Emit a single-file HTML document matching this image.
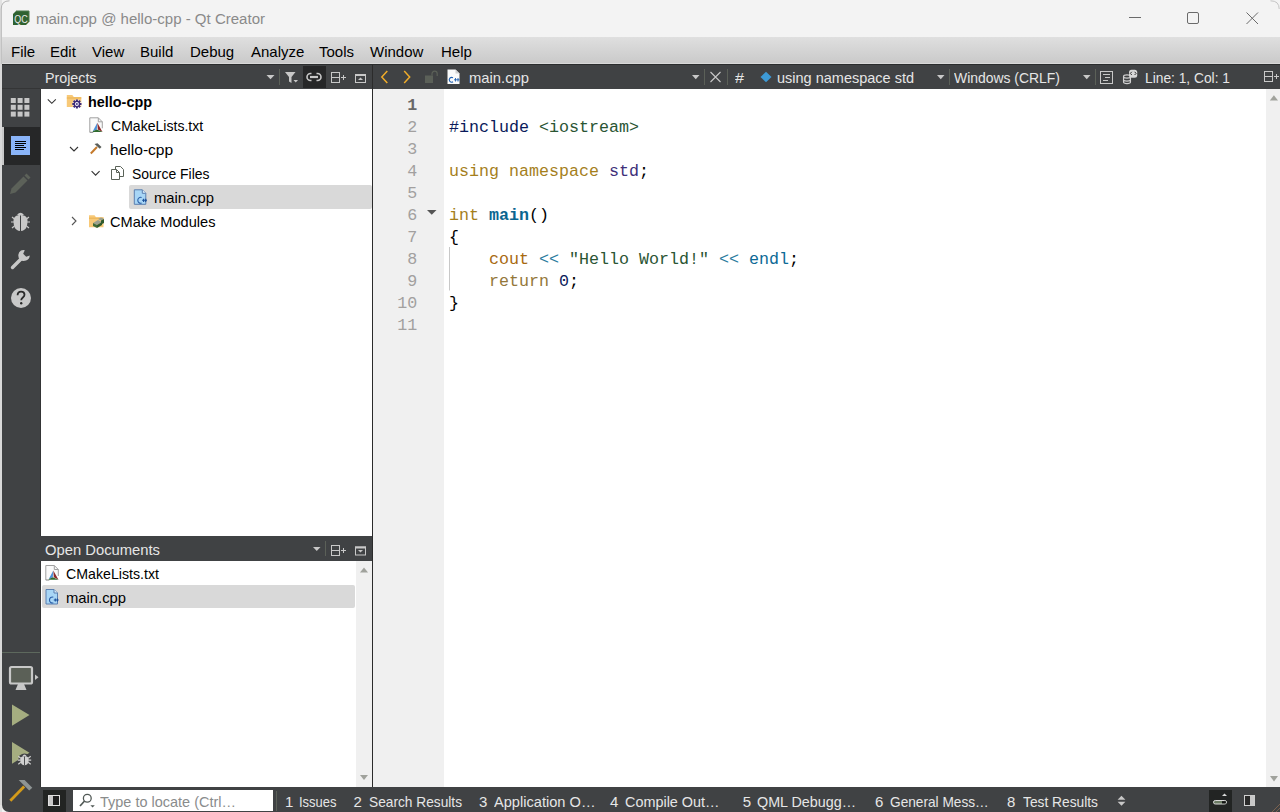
<!DOCTYPE html>
<html><head><meta charset="utf-8"><title>Qt Creator</title>
<style>
*{box-sizing:border-box;margin:0;padding:0}
html,body{width:1280px;height:812px;overflow:hidden;background:#f3f3f3}
.a{position:absolute}
.t{position:absolute;white-space:pre;line-height:1}
svg{position:absolute;left:0;top:0}
</style></head><body>
<div class="a" style="left:0px;top:0px;width:1280px;height:37px;background:#f3f3f3;"></div>
<div class="a" style="left:0px;top:37px;width:1280px;height:26px;background:linear-gradient(#dfdfdf,#cacaca);"></div>
<div class="a" style="left:0px;top:63px;width:1280px;height:1px;background:#d9d9d9;"></div>
<div class="a" style="left:0px;top:0px;width:2px;height:812px;background:#e2e2e2;"></div>
<div class="a" style="left:2px;top:64px;width:38px;height:748px;background:#404244;border-bottom-left-radius:7px"></div>
<div class="a" style="left:4px;top:127px;width:36px;height:38px;background:#262728;"></div>
<div class="a" style="left:2px;top:127px;width:2px;height:38px;background:#c8c8c8;"></div>
<div class="a" style="left:40px;top:64px;width:1px;height:748px;background:#343536;"></div>
<div class="a" style="left:2px;top:88px;width:38px;height:1px;background:#343536;"></div>
<div class="a" style="left:40px;top:64px;width:333px;height:25px;background:#404244;"></div>
<div class="a" style="left:41px;top:89px;width:331px;height:447px;background:#fff;"></div>
<div class="a" style="left:129px;top:185px;width:243px;height:23.5px;background:#d9d9d9;border-radius:2px"></div>
<div class="a" style="left:40px;top:536px;width:333px;height:25px;background:#404244;"></div>
<div class="a" style="left:41px;top:561px;width:331px;height:226px;background:#fff;"></div>
<div class="a" style="left:356px;top:561px;width:16px;height:226px;background:#f0f0f0;"></div>
<div class="a" style="left:42px;top:585px;width:313.3px;height:23.2px;background:#d9d9d9;border-radius:2px"></div>
<div class="a" style="left:372px;top:64px;width:1px;height:723px;background:#2b2b2b;"></div>
<div class="a" style="left:373px;top:64px;width:907px;height:25px;background:#404244;"></div>
<div class="a" style="left:373px;top:89px;width:71px;height:698px;background:#f0f0f0;"></div>
<div class="a" style="left:444px;top:89px;width:822px;height:698px;background:#fff;"></div>
<div class="a" style="left:1266px;top:89px;width:14px;height:698px;background:#f0f0f0;"></div>
<div class="a" style="left:40px;top:787px;width:1240px;height:25px;background:#404244;"></div>
<div class="a" style="left:303px;top:66px;width:23px;height:22px;background:#262728;"></div>
<div class="a" style="left:43px;top:790px;width:23px;height:22px;background:#222423;"></div>
<div class="a" style="left:72.5px;top:790px;width:200.5px;height:21px;background:#fff;"></div>
<div class="a" style="left:1209px;top:790px;width:23px;height:22px;background:#222423;"></div>
<div class="a" style="left:2px;top:64px;width:1278px;height:1px;background:#2b2d2e;"></div>
<div class="a" style="left:2px;top:652px;width:38px;height:1px;background:#5d685d;"></div>
<svg width="1280" height="812" viewBox="0 0 1280 812">
<path d="M16 11 H29 V22 L26 25 H13 V14 Z" fill="#2f6230"/>
<path d="M16 11 H29 V22" fill="none" stroke="#4f7a4c" stroke-width="1"/>
<text x="14.2" y="22.6" font-family="Liberation Sans" font-size="11" fill="#e8e8e8" textLength="13.5" lengthAdjust="spacingAndGlyphs">QC</text>
<line x1="1129" y1="17.5" x2="1141" y2="17.5" stroke="#6a6a6a" stroke-width="1"/>
<rect x="1187.5" y="12.5" width="11" height="11" rx="1.5" fill="none" stroke="#6a6a6a" stroke-width="1"/>
<path d="M1246.5 12.5 L1258 24 M1258 12.5 L1246.5 24" stroke="#6a6a6a" stroke-width="1"/>
<rect x="10.8" y="98.0" width="5" height="5" fill="#c6c6c6"/>
<rect x="10.8" y="104.8" width="5" height="5" fill="#c6c6c6"/>
<rect x="10.8" y="111.6" width="5" height="5" fill="#c6c6c6"/>
<rect x="17.6" y="98.0" width="5" height="5" fill="#c6c6c6"/>
<rect x="17.6" y="104.8" width="5" height="5" fill="#c6c6c6"/>
<rect x="17.6" y="111.6" width="5" height="5" fill="#c6c6c6"/>
<rect x="24.4" y="98.0" width="5" height="5" fill="#c6c6c6"/>
<rect x="24.4" y="104.8" width="5" height="5" fill="#c6c6c6"/>
<rect x="24.4" y="111.6" width="5" height="5" fill="#c6c6c6"/>
<rect x="11" y="136" width="19" height="19" fill="#8ab4f8"/>
<line x1="15" y1="141.5" x2="26" y2="141.5" stroke="#000" stroke-width="1"/>
<line x1="15" y1="143.5" x2="26" y2="143.5" stroke="#000" stroke-width="1"/>
<line x1="15" y1="145.5" x2="24" y2="145.5" stroke="#000" stroke-width="1"/>
<line x1="15" y1="147.5" x2="26" y2="147.5" stroke="#000" stroke-width="1"/>
<line x1="15" y1="149.5" x2="24" y2="149.5" stroke="#000" stroke-width="1"/>
<path d="M10 194 L11.5 188.5 L23.5 176.5 L27.5 180.5 L15.5 192.5 Z" fill="#5c6159"/>
<path d="M24.5 175.5 L26.5 173.5 L30.5 177.5 L28.5 179.5 Z" fill="#5c6159"/>
<path d="M20.5 231 C14 231 13.5 224 13.5 221 C13.5 217 16 215 20.5 215 C25 215 27.5 217 27.5 221 C27.5 224 27 231 20.5 231 Z" fill="#c8c8c8"/>
<path d="M17 215 Q20.5 210.5 24 215 Z" fill="#c8c8c8"/>
<line x1="20.5" y1="215.5" x2="20.5" y2="231" stroke="#404244" stroke-width="1"/>
<path d="M12 217 L14.5 219 M11 222 H14 M12 228 L14.5 226 M29 217 L26.5 219 M30 222 H27 M29 228 L26.5 226" stroke="#c8c8c8" stroke-width="1.2"/>
<path d="M12.5 267.5 L21.5 258.5" stroke="#c8c8c8" stroke-width="3.4" stroke-linecap="round"/>
<path d="M21 250.5 A6 6 0 0 0 19.8 259.5 A6 6 0 0 0 29.8 255.5 L26.2 256.8 L23.2 253.8 L24.8 250.2 A6 6 0 0 0 21 250.5 Z" fill="#c8c8c8"/>
<circle cx="21" cy="298" r="10" fill="#c8c8c8"/>
<path d="M17.6 295.2 C17.6 292.8 19.2 291.6 21.1 291.6 C23.2 291.6 24.5 292.9 24.5 294.7 C24.5 297.4 21.2 297.5 21.2 300.2" fill="none" stroke="#2a2a2a" stroke-width="1.8"/>
<circle cx="21.2" cy="303.3" r="1.2" fill="#2a2a2a"/>
<rect x="10" y="667" width="22" height="16.5" rx="1.5" fill="#5b6057" stroke="#c8c8c8" stroke-width="2.2"/>
<path d="M18 684 H24 L26.5 690 H15.5 Z" fill="#c8c8c8"/>
<path d="M35 674.5 L38.5 677.3 L35 680 Z" fill="#c8c8c8"/>
<path d="M12 704.5 L29.5 715 L12 725.8 Z" fill="#a5ad80"/>
<path d="M12 742 L29.5 752.8 L12 763.8 Z" fill="#a5ad80"/>
<ellipse cx="24.5" cy="760" rx="6.3" ry="6.6" fill="#404244"/>
<path d="M24.5 765.3 C20.8 765.3 20.2 761 20.2 759.8 C20.2 757.3 21.8 756.3 24.5 756.3 C27.2 756.3 28.8 757.3 28.8 759.8 C28.8 761 28.2 765.3 24.5 765.3 Z" fill="#d0d0d0"/>
<path d="M22.2 756.6 Q24.5 752.6 26.8 756.6 Z" fill="#d0d0d0"/>
<line x1="24.5" y1="756.5" x2="24.5" y2="765.3" stroke="#404244" stroke-width="0.9"/>
<path d="M18.3 756.3 L20.8 758.2 M17.8 760.2 H20.5 M18.3 764.2 L20.8 762.3 M30.7 756.3 L28.2 758.2 M31.2 760.2 H28.5 M30.7 764.2 L28.2 762.3" stroke="#d0d0d0" stroke-width="1.2"/>
<path d="M10.3 800.8 L24.2 786.6" stroke="#d49b1a" stroke-width="2.8"/>
<path d="M18.7 780 H24.6 L32.3 787.7 L29.2 790.4 Z" fill="#8e9494"/>
<path d="M266.5 75 H274.5 L270.5 79.2 Z" fill="#c8c8c8"/>
<line x1="279.5" y1="69" x2="279.5" y2="85" stroke="#5b6058" stroke-width="1"/>
<path d="M285 72 H295.5 L291.5 77 V83 L289 81.5 V77 Z" fill="#c8c8c8"/>
<path d="M293.5 80 H298 L295.75 82.5 Z" fill="#c8c8c8"/>
<path d="M311.5 73.5 H310.5 A3.5 3.5 0 0 0 310.5 80.5 H311.5 M316.5 73.5 H317.5 A3.5 3.5 0 0 1 317.5 80.5 H316.5" fill="none" stroke="#c8c8c8" stroke-width="1.6"/>
<line x1="310" y1="77" x2="318" y2="77" stroke="#c8c8c8" stroke-width="2.2"/>
<rect x="331.5" y="72.5" width="8" height="10" fill="none" stroke="#c8c8c8" stroke-width="1"/>
<line x1="331" y1="77.5" x2="340" y2="77.5" stroke="#c8c8c8" stroke-width="1"/>
<path d="M341 77.5 H346 M343.5 75 V80" stroke="#c8c8c8" stroke-width="1"/>
<rect x="355.5" y="74.5" width="10" height="8" fill="none" stroke="#c8c8c8" stroke-width="1"/>
<rect x="355" y="74" width="11" height="2" fill="#c8c8c8"/>
<path d="M358 80 H363 L360.5 77.5 Z" fill="#c8c8c8"/>
<path d="M313 547 H320.5 L316.75 551 Z" fill="#c8c8c8"/>
<line x1="325.5" y1="541" x2="325.5" y2="556" stroke="#5b6058" stroke-width="1"/>
<rect x="331.5" y="545.5" width="8" height="10" fill="none" stroke="#c8c8c8" stroke-width="1"/>
<line x1="331" y1="550.5" x2="340" y2="550.5" stroke="#c8c8c8" stroke-width="1"/>
<path d="M341 550.5 H346 M343.5 548 V553" stroke="#c8c8c8" stroke-width="1"/>
<rect x="355.5" y="547.0" width="10" height="8" fill="none" stroke="#c8c8c8" stroke-width="1"/>
<rect x="355" y="546.5" width="11" height="2" fill="#c8c8c8"/>
<path d="M358 550.0 H363 L360.5 552.5 Z" fill="#c8c8c8"/>
<path d="M360 572.5 H368 L364 567.5 Z" fill="#a0a29c"/>
<path d="M360 775 H368 L364 780 Z" fill="#a0a29c"/>
<path d="M47.8 99.3 L51.8 103.3 L55.8 99.3" fill="none" stroke="#333" stroke-width="1.1"/>
<path d="M70 147 L74 151 L78 147" fill="none" stroke="#333" stroke-width="1.1"/>
<path d="M91.6 171.2 L95.6 175.2 L99.6 171.2" fill="none" stroke="#333" stroke-width="1.1"/>
<path d="M72 217 L76 221 L72 225" fill="none" stroke="#555" stroke-width="1.1"/>
<path d="M66.8 95 H72.3 L73.8 97 H81.3 V107 H66.8 Z" fill="#f8c978"/>
<path d="M66.8 98 H81.3" stroke="#e9b150" stroke-width="1"/>
<circle cx="76.9" cy="104" r="4.6" fill="#fff" opacity="0.6"/>
<path d="M76.9 99.4 V108.6 M72.3 104 H81.5 M73.65 100.75 L80.15 107.25 M80.15 100.75 L73.65 107.25" stroke="#3d2c7a" stroke-width="2"/>
<circle cx="76.9" cy="104" r="3.2" fill="#3d2c7a"/>
<circle cx="76.9" cy="104" r="1.9" fill="#fff"/>
<circle cx="76.9" cy="104" r="0.9" fill="#3d2c7a"/>
<path d="M89.8 132.3 V117.8 H98.3 L102.3 121.8 V128.3" fill="#fafafa" stroke="#a0a0a0" stroke-width="1"/>
<path d="M89.8 132.3 H93.3" stroke="#808080" stroke-width="1"/>
<path d="M98.3 117.8 V121.8 H102.3" fill="none" stroke="#a0a0a0" stroke-width="1"/>
<path d="M97.3 122.8 L92.8 131.3 L96.8 129.6 Z" fill="#4a90d9"/>
<path d="M97.3 122.8 L102.5 132.1 L97.8 129.6 Z" fill="#8b2a2a"/>
<path d="M92.8 131.3 L96.8 129.5 L102.5 132.1 L92.8 132.1 Z" fill="#2f6a2f"/>
<path d="M45.8 580 V565.5 H54.3 L58.3 569.5 V576" fill="#fafafa" stroke="#a0a0a0" stroke-width="1"/>
<path d="M45.8 580 H49.3" stroke="#808080" stroke-width="1"/>
<path d="M54.3 565.5 V569.5 H58.3" fill="none" stroke="#a0a0a0" stroke-width="1"/>
<path d="M53.3 570.5 L48.8 579 L52.8 577.3 Z" fill="#4a90d9"/>
<path d="M53.3 570.5 L58.5 579.8 L53.8 577.3 Z" fill="#8b2a2a"/>
<path d="M48.8 579 L52.8 577.2 L58.5 579.8 L48.8 579.8 Z" fill="#2f6a2f"/>
<path d="M90.8 153.5 L97 147" stroke="#c57a2c" stroke-width="2"/>
<path d="M94.5 144 L97.5 143.3 L101.5 147 L99.8 148.8 Z" fill="#5a5e5a"/>
<path d="M115.5 166.5 H120.5 L123.5 169.5 V176.5 H115.5 Z" fill="#fff" stroke="#5a6258" stroke-width="1"/>
<path d="M111.5 169.5 H116.5 L119.5 172.5 V179.5 H111.5 Z" fill="#fff" stroke="#5a6258" stroke-width="1"/>
<path d="M116.5 169.5 V172.5 H119.5" fill="none" stroke="#5a6258" stroke-width="1"/>
<path d="M134.3 189.8 H142.3 L145.8 193.3 V204.3 H134.3 Z" fill="#a8d6f6" stroke="#5a7fb0" stroke-width="1"/>
<path d="M142.3 189.8 V193.3 H145.8" fill="#d8eefc" stroke="#5a7fb0" stroke-width="1"/>
<path d="M141.60000000000002 197.5 A2.8 3 0 1 0 141.60000000000002 203.10000000000002" fill="none" stroke="#2a5ea8" stroke-width="1.1"/>
<path d="M142.10000000000002 200.3 H147.0 M143.60000000000002 198.70000000000002 V201.9 M145.70000000000002 198.70000000000002 V201.9" stroke="#1a4f9a" stroke-width="1.1"/>
<path d="M46.0 589.5 H54.0 L57.5 593 V604 H46.0 Z" fill="#a8d6f6" stroke="#5a7fb0" stroke-width="1"/>
<path d="M54.0 589.5 V593 H57.5" fill="#d8eefc" stroke="#5a7fb0" stroke-width="1"/>
<path d="M53.3 597.2 A2.8 3 0 1 0 53.3 602.8" fill="none" stroke="#2a5ea8" stroke-width="1.1"/>
<path d="M53.8 600 H58.7 M55.3 598.4 V601.6 M57.4 598.4 V601.6" stroke="#1a4f9a" stroke-width="1.1"/>
<path d="M89 215.2 H94.5 L96 217.2 H103.5 V227.2 H89 Z" fill="#f8c978"/>
<path d="M89 218.2 H103.5" stroke="#e9b150" stroke-width="1"/>
<path d="M93 223 L98 220 L102 222 L97 225 Z" fill="#9aa090"/>
<path d="M93 223 L97 225 V228 L93 226 Z" fill="#3f6b3a"/>
<path d="M97 225 L102 222 V225 L97 228 Z" fill="#2f5a2c"/>
<path d="M98 219 L101 217.5 L104 219 L101 220.5 Z" fill="#9aa090"/>
<path d="M101 220.5 L104 219 V223 L101 224.5 Z" fill="#2f5a2c"/>
<path d="M387.3 71 L381.8 77 L387.3 83" fill="none" stroke="#f0ac2a" stroke-width="1.5"/>
<path d="M404.2 71 L409.7 77 L404.2 83" fill="none" stroke="#f0ac2a" stroke-width="1.5"/>
<rect x="425" y="75.5" width="8" height="7.5" fill="#5b6058"/>
<path d="M432 75.5 V73.8 A2.6 2.6 0 0 1 437.2 73.8 V76" fill="none" stroke="#5b6058" stroke-width="1.2"/>
<path d="M447.5 69.5 H455.5 L459.5 73.5 V84 H447.5 Z" fill="#fafafa"/>
<path d="M455.5 69.5 V73.5 H459.5 Z" fill="#d0d0d0"/>
<path d="M453 77.8 A2.4 2.4 0 1 0 453 81.8" fill="none" stroke="#2060b0" stroke-width="1.1"/>
<path d="M454 79.8 H459.5 M455.5 78 V81.5 M458 78 V81.5" stroke="#2060b0" stroke-width="0.9"/>
<path d="M692 75 H699.5 L695.75 79.2 Z" fill="#c8c8c8"/>
<line x1="704.5" y1="69" x2="704.5" y2="85" stroke="#5b6058" stroke-width="1"/>
<path d="M710.5 72 L720.5 82 M720.5 72 L710.5 82" stroke="#c8c8c8" stroke-width="1.1"/>
<line x1="727.5" y1="69" x2="727.5" y2="85" stroke="#5b6058" stroke-width="1"/>
<path d="M766 71.8 L771.5 77 L766 82.2 L760.5 77 Z" fill="#3d9ad6"/>
<path d="M937 75 H944.5 L940.75 79.2 Z" fill="#c8c8c8"/>
<line x1="949.5" y1="69" x2="949.5" y2="85" stroke="#5b6058" stroke-width="1"/>
<path d="M1083 75 H1090.5 L1086.75 79.2 Z" fill="#c8c8c8"/>
<line x1="1095.5" y1="69" x2="1095.5" y2="85" stroke="#5b6058" stroke-width="1"/>
<rect x="1100.5" y="71.5" width="12" height="12" fill="none" stroke="#c8c8c8" stroke-width="1"/>
<path d="M1103 74.5 H1110 M1105 77.5 H1110 M1103 80.5 H1108" stroke="#c8c8c8" stroke-width="1"/>
<path d="M1123.5 76.5 V82 A3.5 1.6 0 0 0 1130.5 82 V76.5 A3.5 1.6 0 0 0 1123.5 76.5 A3.5 1.6 0 0 0 1130.5 76.5 M1123.5 79.5 A3.5 1.6 0 0 0 1130.5 79.5" fill="none" stroke="#d0d0d0" stroke-width="1.1"/>
<rect x="1129" y="69.8" width="8.2" height="8" rx="2.5" fill="#d8d8d8"/>
<path d="M1131.8 71.8 L1130.3 73.4 L1131.8 75 M1134.6 71.8 L1136.1 73.4 L1134.6 75" fill="none" stroke="#303030" stroke-width="1"/>
<rect x="1264.5" y="71.5" width="8" height="10" fill="none" stroke="#c8c8c8" stroke-width="1"/>
<line x1="1264" y1="76.5" x2="1273" y2="76.5" stroke="#c8c8c8" stroke-width="1"/>
<path d="M1274 76.5 H1279 M1276.5 74 V79" stroke="#c8c8c8" stroke-width="1"/>
<path d="M1269.8 100.6 H1278 L1273.9 95.2 Z" fill="#a0a29c"/>
<path d="M1270 776 H1278 L1274 781.5 Z" fill="#a0a29c"/>
<path d="M427 210 H436.5 L431.75 214.8 Z" fill="#555"/>
<line x1="449.5" y1="247" x2="449.5" y2="290.5" stroke="#c8c8c8" stroke-width="1"/>
<rect x="48.5" y="795.5" width="11" height="10" fill="#1e1e1e" stroke="#e0e0e0" stroke-width="1"/>
<rect x="49" y="796" width="4" height="9" fill="#c8c8c8"/>
<circle cx="87.3" cy="798.2" r="3.9" fill="none" stroke="#505855" stroke-width="1.3"/>
<line x1="84.6" y1="801" x2="80" y2="806" stroke="#505855" stroke-width="1.7"/>
<path d="M90.4 805.2 H94.8 L92.6 807.4 Z" fill="#505855"/>
<line x1="276.5" y1="791" x2="276.5" y2="811" stroke="#5b6058" stroke-width="1"/>
<path d="M1117.6 799.7 H1125.4 L1121.5 795.8 Z" fill="#c8c8c8"/>
<path d="M1117.6 801.8 H1125.4 L1121.5 805.8 Z" fill="#c8c8c8"/>
<rect x="1213.5" y="800.5" width="13" height="3.5" rx="1.75" fill="#6a7a62" stroke="#d8d8d8" stroke-width="1"/>
<rect x="1222" y="801.2" width="3.8" height="2.2" fill="#111"/>
<path d="M1222 796 H1227 L1224.5 793.4 Z" fill="#d8d8d8"/>
<rect x="1244.5" y="795.5" width="10" height="10" fill="#2a2a2a" stroke="#d0d0d0" stroke-width="1"/>
<rect x="1250" y="795.5" width="4.5" height="10" fill="#c8c8c8"/>
<path d="M1272 812 L1280 804 M1276 812 L1280 808" stroke="#8a6a50" stroke-width="0.8"/>
<path d="M1.2 64 V9 Q1.2 0.8 9.5 0.8" fill="none" stroke="#b4b4b4" stroke-width="1"/>
<line x1="1" y1="64" x2="1" y2="805" stroke="#d0d0d0" stroke-width="1"/>
<path d="M1270.5 0.8 Q1279.2 0.8 1279.2 9" fill="none" stroke="#c4c4c4" stroke-width="1"/>
</svg>
<div class="t" id="t0" style="left:35.70px;top:10.83px;font-family:'Liberation Sans',sans-serif;font-size:15.5px;color:#8a8a8a;font-weight:400;transform:scaleX(0.9692);transform-origin:0 0;">main.cpp @ hello-cpp - Qt Creator</div>
<div class="t" id="t1" style="left:11.00px;top:43.55px;font-family:'Liberation Sans',sans-serif;font-size:15px;color:#000;font-weight:400;">File</div>
<div class="t" id="t2" style="left:50.00px;top:43.55px;font-family:'Liberation Sans',sans-serif;font-size:15px;color:#000;font-weight:400;">Edit</div>
<div class="t" id="t3" style="left:92.00px;top:43.55px;font-family:'Liberation Sans',sans-serif;font-size:15px;color:#000;font-weight:400;">View</div>
<div class="t" id="t4" style="left:140.00px;top:43.55px;font-family:'Liberation Sans',sans-serif;font-size:15px;color:#000;font-weight:400;">Build</div>
<div class="t" id="t5" style="left:190.00px;top:43.55px;font-family:'Liberation Sans',sans-serif;font-size:15px;color:#000;font-weight:400;">Debug</div>
<div class="t" id="t6" style="left:251.00px;top:43.55px;font-family:'Liberation Sans',sans-serif;font-size:15px;color:#000;font-weight:400;">Analyze</div>
<div class="t" id="t7" style="left:319.00px;top:43.55px;font-family:'Liberation Sans',sans-serif;font-size:15px;color:#000;font-weight:400;">Tools</div>
<div class="t" id="t8" style="left:370.00px;top:43.55px;font-family:'Liberation Sans',sans-serif;font-size:15px;color:#000;font-weight:400;">Window</div>
<div class="t" id="t9" style="left:441.00px;top:43.55px;font-family:'Liberation Sans',sans-serif;font-size:15px;color:#000;font-weight:400;">Help</div>
<div class="t" id="t10" style="left:44.60px;top:70.35px;font-family:'Liberation Sans',sans-serif;font-size:15px;color:#e6e6e6;font-weight:400;transform:scaleX(0.9504);transform-origin:0 0;">Projects</div>
<div class="t" id="t11" style="left:44.80px;top:542.05px;font-family:'Liberation Sans',sans-serif;font-size:15px;color:#e6e6e6;font-weight:400;transform:scaleX(0.9851);transform-origin:0 0;">Open Documents</div>
<div class="t" id="t12" style="left:87.80px;top:93.85px;font-family:'Liberation Sans',sans-serif;font-size:15px;color:#000;font-weight:700;transform:scaleX(0.9599);transform-origin:0 0;">hello-cpp</div>
<div class="t" id="t13" style="left:110.50px;top:117.75px;font-family:'Liberation Sans',sans-serif;font-size:15px;color:#000;font-weight:400;transform:scaleX(0.9374);transform-origin:0 0;">CMakeLists.txt</div>
<div class="t" id="t14" style="left:109.50px;top:141.75px;font-family:'Liberation Sans',sans-serif;font-size:15px;color:#000;font-weight:400;transform:scaleX(1.0382);transform-origin:0 0;">hello-cpp</div>
<div class="t" id="t15" style="left:131.60px;top:165.75px;font-family:'Liberation Sans',sans-serif;font-size:15px;color:#000;font-weight:400;transform:scaleX(0.9295);transform-origin:0 0;">Source Files</div>
<div class="t" id="t16" style="left:153.60px;top:189.75px;font-family:'Liberation Sans',sans-serif;font-size:15px;color:#000;font-weight:400;transform:scaleX(0.9856);transform-origin:0 0;">main.cpp</div>
<div class="t" id="t17" style="left:110.30px;top:213.75px;font-family:'Liberation Sans',sans-serif;font-size:15px;color:#000;font-weight:400;transform:scaleX(0.9733);transform-origin:0 0;">CMake Modules</div>
<div class="t" id="t18" style="left:65.70px;top:565.75px;font-family:'Liberation Sans',sans-serif;font-size:15px;color:#000;font-weight:400;transform:scaleX(0.9445);transform-origin:0 0;">CMakeLists.txt</div>
<div class="t" id="t19" style="left:66.20px;top:589.65px;font-family:'Liberation Sans',sans-serif;font-size:15px;color:#000;font-weight:400;transform:scaleX(0.9856);transform-origin:0 0;">main.cpp</div>
<div class="t" id="t20" style="left:468.60px;top:70.25px;font-family:'Liberation Sans',sans-serif;font-size:15px;color:#e6e6e6;font-weight:400;transform:scaleX(0.9856);transform-origin:0 0;">main.cpp</div>
<div class="t" id="t21" style="left:776.60px;top:70.25px;font-family:'Liberation Sans',sans-serif;font-size:15px;color:#e6e6e6;font-weight:400;transform:scaleX(0.9664);transform-origin:0 0;">using namespace std</div>
<div class="t" id="t22" style="left:953.60px;top:70.25px;font-family:'Liberation Sans',sans-serif;font-size:15px;color:#e6e6e6;font-weight:400;transform:scaleX(0.9283);transform-origin:0 0;">Windows (CRLF)</div>
<div class="t" id="t23" style="left:1145.10px;top:70.25px;font-family:'Liberation Sans',sans-serif;font-size:15px;color:#e6e6e6;font-weight:400;transform:scaleX(0.9183);transform-origin:0 0;">Line: 1, Col: 1</div>
<div class="t" id="t24" style="top:98.33px;font-family:'Liberation Mono',monospace;font-size:16.67px;color:#686868;font-weight:700;right:862.7px">1</div>
<div class="t" id="t25" style="top:120.33px;font-family:'Liberation Mono',monospace;font-size:16.67px;color:#a2a09f;font-weight:400;right:862.7px">2</div>
<div class="t" id="t26" style="top:142.33px;font-family:'Liberation Mono',monospace;font-size:16.67px;color:#a2a09f;font-weight:400;right:862.7px">3</div>
<div class="t" id="t27" style="top:164.33px;font-family:'Liberation Mono',monospace;font-size:16.67px;color:#a2a09f;font-weight:400;right:862.7px">4</div>
<div class="t" id="t28" style="top:186.33px;font-family:'Liberation Mono',monospace;font-size:16.67px;color:#a2a09f;font-weight:400;right:862.7px">5</div>
<div class="t" id="t29" style="top:208.33px;font-family:'Liberation Mono',monospace;font-size:16.67px;color:#a2a09f;font-weight:400;right:862.7px">6</div>
<div class="t" id="t30" style="top:230.33px;font-family:'Liberation Mono',monospace;font-size:16.67px;color:#a2a09f;font-weight:400;right:862.7px">7</div>
<div class="t" id="t31" style="top:252.33px;font-family:'Liberation Mono',monospace;font-size:16.67px;color:#a2a09f;font-weight:400;right:862.7px">8</div>
<div class="t" id="t32" style="top:274.33px;font-family:'Liberation Mono',monospace;font-size:16.67px;color:#a2a09f;font-weight:400;right:862.7px">9</div>
<div class="t" id="t33" style="top:296.33px;font-family:'Liberation Mono',monospace;font-size:16.67px;color:#a2a09f;font-weight:400;right:862.7px">10</div>
<div class="t" id="t34" style="top:318.33px;font-family:'Liberation Mono',monospace;font-size:16.67px;color:#a2a09f;font-weight:400;right:862.7px">11</div>
<div class="t" id="t35" style="left:449.00px;top:120.33px;font-family:'Liberation Mono',monospace;font-size:16.67px;color:#000;font-weight:400;"><span style="color:#0a1a5a;">#include</span><span style="color:#000;"> </span><span style="color:#2a5533;">&lt;iostream&gt;</span></div>
<div class="t" id="t36" style="left:449.00px;top:164.33px;font-family:'Liberation Mono',monospace;font-size:16.67px;color:#000;font-weight:400;"><span style="color:#a57f1c;">using</span><span style="color:#000;"> </span><span style="color:#a57f1c;">namespace</span><span style="color:#000;"> </span><span style="color:#40307a;">std</span><span style="color:#000;">;</span></div>
<div class="t" id="t37" style="left:449.00px;top:208.33px;font-family:'Liberation Mono',monospace;font-size:16.67px;color:#000;font-weight:400;"><span style="color:#a57f1c;">int</span><span style="color:#000;"> </span><span style="color:#0a6590;font-weight:700;">main</span><span style="color:#000;">()</span></div>
<div class="t" id="t38" style="left:449.00px;top:230.33px;font-family:'Liberation Mono',monospace;font-size:16.67px;color:#000;font-weight:400;"><span style="color:#000;">{</span></div>
<div class="t" id="t39" style="left:489.00px;top:252.33px;font-family:'Liberation Mono',monospace;font-size:16.67px;color:#000;font-weight:400;"><span style="color:#a86a10;">cout</span><span style="color:#000;"> </span><span style="color:#2b7ca0;">&lt;&lt;</span><span style="color:#000;"> </span><span style="color:#2a5533;">"Hello World!"</span><span style="color:#000;"> </span><span style="color:#2b7ca0;">&lt;&lt;</span><span style="color:#000;"> </span><span style="color:#0d6a96;">endl</span><span style="color:#000;">;</span></div>
<div class="t" id="t40" style="left:489.00px;top:274.33px;font-family:'Liberation Mono',monospace;font-size:16.67px;color:#000;font-weight:400;"><span style="color:#94783a;">return</span><span style="color:#000;"> </span><span style="color:#0a1a5a;">0</span><span style="color:#000;">;</span></div>
<div class="t" id="t41" style="left:449.00px;top:296.33px;font-family:'Liberation Mono',monospace;font-size:16.67px;color:#000;font-weight:400;"><span style="color:#000;">}</span></div>
<div class="t" id="t42" style="left:285.10px;top:793.55px;font-family:'Liberation Sans',sans-serif;font-size:15px;color:#e6e6e6;font-weight:400;">1</div>
<div class="t" id="t43" style="left:299.10px;top:793.55px;font-family:'Liberation Sans',sans-serif;font-size:15px;color:#e6e6e6;font-weight:400;transform:scaleX(0.8649);transform-origin:0 0;">Issues</div>
<div class="t" id="t44" style="left:353.60px;top:793.55px;font-family:'Liberation Sans',sans-serif;font-size:15px;color:#e6e6e6;font-weight:400;">2</div>
<div class="t" id="t45" style="left:368.60px;top:793.55px;font-family:'Liberation Sans',sans-serif;font-size:15px;color:#e6e6e6;font-weight:400;transform:scaleX(0.9143);transform-origin:0 0;">Search Results</div>
<div class="t" id="t46" style="left:479.10px;top:793.55px;font-family:'Liberation Sans',sans-serif;font-size:15px;color:#e6e6e6;font-weight:400;">3</div>
<div class="t" id="t47" style="left:493.60px;top:793.55px;font-family:'Liberation Sans',sans-serif;font-size:15px;color:#e6e6e6;font-weight:400;transform:scaleX(0.9739);transform-origin:0 0;">Application O…</div>
<div class="t" id="t48" style="left:610.10px;top:793.55px;font-family:'Liberation Sans',sans-serif;font-size:15px;color:#e6e6e6;font-weight:400;">4</div>
<div class="t" id="t49" style="left:625.10px;top:793.55px;font-family:'Liberation Sans',sans-serif;font-size:15px;color:#e6e6e6;font-weight:400;transform:scaleX(0.9606);transform-origin:0 0;">Compile Out…</div>
<div class="t" id="t50" style="left:742.85px;top:793.55px;font-family:'Liberation Sans',sans-serif;font-size:15px;color:#e6e6e6;font-weight:400;">5</div>
<div class="t" id="t51" style="left:757.10px;top:793.55px;font-family:'Liberation Sans',sans-serif;font-size:15px;color:#e6e6e6;font-weight:400;transform:scaleX(0.9549);transform-origin:0 0;">QML Debugg…</div>
<div class="t" id="t52" style="left:875.10px;top:793.55px;font-family:'Liberation Sans',sans-serif;font-size:15px;color:#e6e6e6;font-weight:400;">6</div>
<div class="t" id="t53" style="left:889.85px;top:793.55px;font-family:'Liberation Sans',sans-serif;font-size:15px;color:#e6e6e6;font-weight:400;transform:scaleX(0.9112);transform-origin:0 0;">General Mess…</div>
<div class="t" id="t54" style="left:1007.10px;top:793.55px;font-family:'Liberation Sans',sans-serif;font-size:15px;color:#e6e6e6;font-weight:400;">8</div>
<div class="t" id="t55" style="left:1022.85px;top:793.55px;font-family:'Liberation Sans',sans-serif;font-size:15px;color:#e6e6e6;font-weight:400;transform:scaleX(0.9180);transform-origin:0 0;">Test Results</div>
<div class="t" id="t56" style="left:735.10px;top:71.10px;font-family:'Liberation Sans',sans-serif;font-size:14px;color:#e6e6e6;font-weight:400;transform:scaleX(1.1543);transform-origin:0 0;">#</div>
<div class="t" id="t57" style="left:99.85px;top:793.55px;font-family:'Liberation Sans',sans-serif;font-size:15px;color:#8a8c8c;font-weight:400;transform:scaleX(0.9653);transform-origin:0 0;">Type to locate (Ctrl…</div>
</body></html>
